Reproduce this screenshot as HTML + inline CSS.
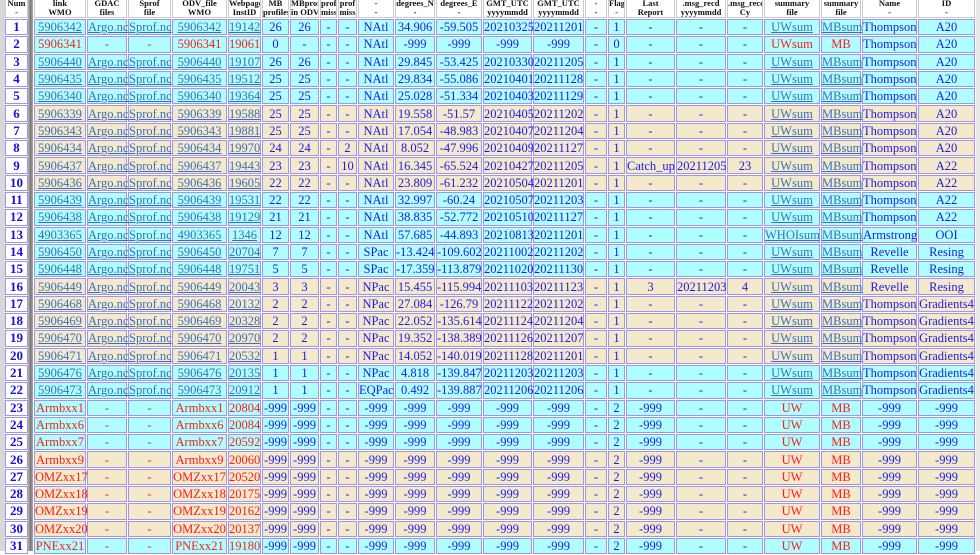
<!DOCTYPE html>
<html><head><meta charset="utf-8"><style>
html,body{margin:0;padding:0;width:980px;height:551px;overflow:hidden;background:#fff;font-family:"Liberation Serif",serif;}
#lb{position:absolute;left:0;top:0;width:5px;height:551px;background:#d8d8d8;}
#bar{position:absolute;left:28px;top:0;width:5px;height:551px;background:linear-gradient(90deg,#bbb,#777,#aaa);}
#rb{position:absolute;left:976px;top:0;width:4px;height:551px;background:#e8e8e8;}
table{position:absolute;top:-3px;border-collapse:separate;border-spacing:1px;table-layout:fixed;}
td,th{padding:0;box-sizing:border-box;border:1px solid #a094f0;height:16.3px;text-align:center;white-space:nowrap;overflow:visible;font-size:12.5px;line-height:14px;color:#1b1bee;font-weight:normal;}
th{height:19px;background:#fff;border-color:#ccc;color:#111;font-weight:bold;font-size:8.5px;line-height:9px;overflow:hidden;}
#num{left:4px;width:25px;}
#num td{background:#fff;font-weight:bold;font-size:13px;color:#1010e0;}
#main{left:33px;width:943px;}
tr.c td{background:#b0ffff;}
tr.b td{background:#f5e9cc;}
a{color:#3a6fc0;text-decoration:underline;}
.r{color:#ff1a1a;}
</style></head><body>
<div id="lb"></div><div id="bar"></div><div id="rb"></div>
<table id="num">
<tr><th>Num<br>-</th></tr>
<tr><td>1</td></tr><tr><td>2</td></tr><tr><td>3</td></tr><tr><td>4</td></tr><tr><td>5</td></tr><tr><td>6</td></tr><tr><td>7</td></tr><tr><td>8</td></tr><tr><td>9</td></tr><tr><td>10</td></tr><tr><td>11</td></tr><tr><td>12</td></tr><tr><td>13</td></tr><tr><td>14</td></tr><tr><td>15</td></tr><tr><td>16</td></tr><tr><td>17</td></tr><tr><td>18</td></tr><tr><td>19</td></tr><tr><td>20</td></tr><tr><td>21</td></tr><tr><td>22</td></tr><tr><td>23</td></tr><tr><td>24</td></tr><tr><td>25</td></tr><tr><td>26</td></tr><tr><td>27</td></tr><tr><td>28</td></tr><tr><td>29</td></tr><tr><td>30</td></tr><tr><td>31</td></tr>
</table>
<table id="main">
<colgroup><col style="width:52px"><col style="width:40px"><col style="width:43px"><col style="width:55px"><col style="width:33px"><col style="width:27px"><col style="width:29px"><col style="width:17px"><col style="width:19px"><col style="width:36px"><col style="width:40px"><col style="width:46px"><col style="width:49px"><col style="width:51px"><col style="width:22px"><col style="width:17px"><col style="width:49px"><col style="width:50px"><col style="width:36px"><col style="width:56px"><col style="width:40px"><col style="width:55px"><col style="width:57px"></colgroup>
<tr><th>link<br>WMO</th><th>GDAC<br>files</th><th>Sprof<br>file</th><th>ODV_file<br>WMO</th><th>Webpage<br>InstID</th><th>MB<br>profiles</th><th>MBprof<br>in ODV</th><th>prof<br>miss</th><th>prof<br>miss</th><th>-<br>-</th><th>degrees_N<br>-</th><th>degrees_E<br>-</th><th>GMT_UTC<br>yyyymmdd</th><th>GMT_UTC<br>yyyymmdd</th><th>-<br>-</th><th>Flag<br>-</th><th>Last<br>Report</th><th>.msg_recd<br>yyyymmdd</th><th>.msg_recd<br>Cy</th><th>summary<br>file</th><th>summary<br>file</th><th>Name<br>-</th><th>ID<br>-</th></tr>
<tr class="c"><td><a>5906342</a></td><td><a>Argo.nc</a></td><td><a>Sprof.nc</a></td><td><a>5906342</a></td><td><a>19142</a></td><td>26</td><td>26</td><td>-</td><td>-</td><td>NAtl</td><td>34.906</td><td>-59.505</td><td>20210325</td><td>20211201</td><td>-</td><td>1</td><td>-</td><td>-</td><td>-</td><td><a>UWsum</a></td><td><a>MBsum</a></td><td>Thompson</td><td>A20</td></tr>
<tr class="c"><td class="r">5906341</td><td class="r">-</td><td class="r">-</td><td class="r">5906341</td><td class="r">19061</td><td>0</td><td>-</td><td>-</td><td>-</td><td>NAtl</td><td>-999</td><td>-999</td><td>-999</td><td>-999</td><td>-</td><td>0</td><td>-</td><td>-</td><td>-</td><td class="r">UWsum</td><td class="r">MB</td><td>Thompson</td><td>A20</td></tr>
<tr class="c"><td><a>5906440</a></td><td><a>Argo.nc</a></td><td><a>Sprof.nc</a></td><td><a>5906440</a></td><td><a>19107</a></td><td>26</td><td>26</td><td>-</td><td>-</td><td>NAtl</td><td>29.845</td><td>-53.425</td><td>20210330</td><td>20211205</td><td>-</td><td>1</td><td>-</td><td>-</td><td>-</td><td><a>UWsum</a></td><td><a>MBsum</a></td><td>Thompson</td><td>A20</td></tr>
<tr class="c"><td><a>5906435</a></td><td><a>Argo.nc</a></td><td><a>Sprof.nc</a></td><td><a>5906435</a></td><td><a>19512</a></td><td>25</td><td>25</td><td>-</td><td>-</td><td>NAtl</td><td>29.834</td><td>-55.086</td><td>20210401</td><td>20211128</td><td>-</td><td>1</td><td>-</td><td>-</td><td>-</td><td><a>UWsum</a></td><td><a>MBsum</a></td><td>Thompson</td><td>A20</td></tr>
<tr class="c"><td><a>5906340</a></td><td><a>Argo.nc</a></td><td><a>Sprof.nc</a></td><td><a>5906340</a></td><td><a>19364</a></td><td>25</td><td>25</td><td>-</td><td>-</td><td>NAtl</td><td>25.028</td><td>-51.334</td><td>20210403</td><td>20211129</td><td>-</td><td>1</td><td>-</td><td>-</td><td>-</td><td><a>UWsum</a></td><td><a>MBsum</a></td><td>Thompson</td><td>A20</td></tr>
<tr class="b"><td><a>5906339</a></td><td><a>Argo.nc</a></td><td><a>Sprof.nc</a></td><td><a>5906339</a></td><td><a>19588</a></td><td>25</td><td>25</td><td>-</td><td>-</td><td>NAtl</td><td>19.558</td><td>-51.57</td><td>20210405</td><td>20211202</td><td>-</td><td>1</td><td>-</td><td>-</td><td>-</td><td><a>UWsum</a></td><td><a>MBsum</a></td><td>Thompson</td><td>A20</td></tr>
<tr class="b"><td><a>5906343</a></td><td><a>Argo.nc</a></td><td><a>Sprof.nc</a></td><td><a>5906343</a></td><td><a>19881</a></td><td>25</td><td>25</td><td>-</td><td>-</td><td>NAtl</td><td>17.054</td><td>-48.983</td><td>20210407</td><td>20211204</td><td>-</td><td>1</td><td>-</td><td>-</td><td>-</td><td><a>UWsum</a></td><td><a>MBsum</a></td><td>Thompson</td><td>A20</td></tr>
<tr class="b"><td><a>5906434</a></td><td><a>Argo.nc</a></td><td><a>Sprof.nc</a></td><td><a>5906434</a></td><td><a>19970</a></td><td>24</td><td>24</td><td>-</td><td>2</td><td>NAtl</td><td>8.052</td><td>-47.996</td><td>20210409</td><td>20211127</td><td>-</td><td>1</td><td>-</td><td>-</td><td>-</td><td><a>UWsum</a></td><td><a>MBsum</a></td><td>Thompson</td><td>A20</td></tr>
<tr class="b"><td><a>5906437</a></td><td><a>Argo.nc</a></td><td><a>Sprof.nc</a></td><td><a>5906437</a></td><td><a>19443</a></td><td>23</td><td>23</td><td>-</td><td>10</td><td>NAtl</td><td>16.345</td><td>-65.524</td><td>20210427</td><td>20211205</td><td>-</td><td>1</td><td>Catch_up</td><td>20211205</td><td>23</td><td><a>UWsum</a></td><td><a>MBsum</a></td><td>Thompson</td><td>A22</td></tr>
<tr class="b"><td><a>5906436</a></td><td><a>Argo.nc</a></td><td><a>Sprof.nc</a></td><td><a>5906436</a></td><td><a>19605</a></td><td>22</td><td>22</td><td>-</td><td>-</td><td>NAtl</td><td>23.809</td><td>-61.232</td><td>20210504</td><td>20211201</td><td>-</td><td>1</td><td>-</td><td>-</td><td>-</td><td><a>UWsum</a></td><td><a>MBsum</a></td><td>Thompson</td><td>A22</td></tr>
<tr class="c"><td><a>5906439</a></td><td><a>Argo.nc</a></td><td><a>Sprof.nc</a></td><td><a>5906439</a></td><td><a>19531</a></td><td>22</td><td>22</td><td>-</td><td>-</td><td>NAtl</td><td>32.997</td><td>-60.24</td><td>20210507</td><td>20211203</td><td>-</td><td>1</td><td>-</td><td>-</td><td>-</td><td><a>UWsum</a></td><td><a>MBsum</a></td><td>Thompson</td><td>A22</td></tr>
<tr class="c"><td><a>5906438</a></td><td><a>Argo.nc</a></td><td><a>Sprof.nc</a></td><td><a>5906438</a></td><td><a>19129</a></td><td>21</td><td>21</td><td>-</td><td>-</td><td>NAtl</td><td>38.835</td><td>-52.772</td><td>20210510</td><td>20211127</td><td>-</td><td>1</td><td>-</td><td>-</td><td>-</td><td><a>UWsum</a></td><td><a>MBsum</a></td><td>Thompson</td><td>A22</td></tr>
<tr class="c"><td><a>4903365</a></td><td><a>Argo.nc</a></td><td><a>Sprof.nc</a></td><td><a>4903365</a></td><td><a>1346</a></td><td>12</td><td>12</td><td>-</td><td>-</td><td>NAtl</td><td>57.685</td><td>-44.893</td><td>20210813</td><td>20211201</td><td>-</td><td>1</td><td>-</td><td>-</td><td>-</td><td><a>WHOIsum</a></td><td><a>MBsum</a></td><td>Armstrong</td><td>OOI</td></tr>
<tr class="c"><td><a>5906450</a></td><td><a>Argo.nc</a></td><td><a>Sprof.nc</a></td><td><a>5906450</a></td><td><a>20704</a></td><td>7</td><td>7</td><td>-</td><td>-</td><td>SPac</td><td>-13.424</td><td>-109.602</td><td>20211002</td><td>20211202</td><td>-</td><td>1</td><td>-</td><td>-</td><td>-</td><td><a>UWsum</a></td><td><a>MBsum</a></td><td>Revelle</td><td>Resing</td></tr>
<tr class="c"><td><a>5906448</a></td><td><a>Argo.nc</a></td><td><a>Sprof.nc</a></td><td><a>5906448</a></td><td><a>19751</a></td><td>5</td><td>5</td><td>-</td><td>-</td><td>SPac</td><td>-17.359</td><td>-113.879</td><td>20211020</td><td>20211130</td><td>-</td><td>1</td><td>-</td><td>-</td><td>-</td><td><a>UWsum</a></td><td><a>MBsum</a></td><td>Revelle</td><td>Resing</td></tr>
<tr class="b"><td><a>5906449</a></td><td><a>Argo.nc</a></td><td><a>Sprof.nc</a></td><td><a>5906449</a></td><td><a>20043</a></td><td>3</td><td>3</td><td>-</td><td>-</td><td>NPac</td><td>15.455</td><td>-115.994</td><td>20211103</td><td>20211123</td><td>-</td><td>1</td><td>3</td><td>20211203</td><td>4</td><td><a>UWsum</a></td><td><a>MBsum</a></td><td>Revelle</td><td>Resing</td></tr>
<tr class="b"><td><a>5906468</a></td><td><a>Argo.nc</a></td><td><a>Sprof.nc</a></td><td><a>5906468</a></td><td><a>20132</a></td><td>2</td><td>2</td><td>-</td><td>-</td><td>NPac</td><td>27.084</td><td>-126.79</td><td>20211122</td><td>20211202</td><td>-</td><td>1</td><td>-</td><td>-</td><td>-</td><td><a>UWsum</a></td><td><a>MBsum</a></td><td>Thompson</td><td>Gradients4</td></tr>
<tr class="b"><td><a>5906469</a></td><td><a>Argo.nc</a></td><td><a>Sprof.nc</a></td><td><a>5906469</a></td><td><a>20328</a></td><td>2</td><td>2</td><td>-</td><td>-</td><td>NPac</td><td>22.052</td><td>-135.614</td><td>20211124</td><td>20211204</td><td>-</td><td>1</td><td>-</td><td>-</td><td>-</td><td><a>UWsum</a></td><td><a>MBsum</a></td><td>Thompson</td><td>Gradients4</td></tr>
<tr class="b"><td><a>5906470</a></td><td><a>Argo.nc</a></td><td><a>Sprof.nc</a></td><td><a>5906470</a></td><td><a>20970</a></td><td>2</td><td>2</td><td>-</td><td>-</td><td>NPac</td><td>19.352</td><td>-138.389</td><td>20211126</td><td>20211207</td><td>-</td><td>1</td><td>-</td><td>-</td><td>-</td><td><a>UWsum</a></td><td><a>MBsum</a></td><td>Thompson</td><td>Gradients4</td></tr>
<tr class="b"><td><a>5906471</a></td><td><a>Argo.nc</a></td><td><a>Sprof.nc</a></td><td><a>5906471</a></td><td><a>20532</a></td><td>1</td><td>1</td><td>-</td><td>-</td><td>NPac</td><td>14.052</td><td>-140.019</td><td>20211128</td><td>20211201</td><td>-</td><td>1</td><td>-</td><td>-</td><td>-</td><td><a>UWsum</a></td><td><a>MBsum</a></td><td>Thompson</td><td>Gradients4</td></tr>
<tr class="c"><td><a>5906476</a></td><td><a>Argo.nc</a></td><td><a>Sprof.nc</a></td><td><a>5906476</a></td><td><a>20135</a></td><td>1</td><td>1</td><td>-</td><td>-</td><td>NPac</td><td>4.818</td><td>-139.847</td><td>20211203</td><td>20211203</td><td>-</td><td>1</td><td>-</td><td>-</td><td>-</td><td><a>UWsum</a></td><td><a>MBsum</a></td><td>Thompson</td><td>Gradients4</td></tr>
<tr class="c"><td><a>5906473</a></td><td><a>Argo.nc</a></td><td><a>Sprof.nc</a></td><td><a>5906473</a></td><td><a>20912</a></td><td>1</td><td>1</td><td>-</td><td>-</td><td>EQPac</td><td>0.492</td><td>-139.887</td><td>20211206</td><td>20211206</td><td>-</td><td>1</td><td>-</td><td>-</td><td>-</td><td><a>UWsum</a></td><td><a>MBsum</a></td><td>Thompson</td><td>Gradients4</td></tr>
<tr class="c"><td class="r">Armbxx1</td><td class="r">-</td><td class="r">-</td><td class="r">Armbxx1</td><td class="r">20804</td><td>-999</td><td>-999</td><td>-</td><td>-</td><td>-999</td><td>-999</td><td>-999</td><td>-999</td><td>-999</td><td>-</td><td>2</td><td>-999</td><td>-</td><td>-</td><td class="r">UW</td><td class="r">MB</td><td>-999</td><td>-999</td></tr>
<tr class="c"><td class="r">Armbxx6</td><td class="r">-</td><td class="r">-</td><td class="r">Armbxx6</td><td class="r">20084</td><td>-999</td><td>-999</td><td>-</td><td>-</td><td>-999</td><td>-999</td><td>-999</td><td>-999</td><td>-999</td><td>-</td><td>2</td><td>-999</td><td>-</td><td>-</td><td class="r">UW</td><td class="r">MB</td><td>-999</td><td>-999</td></tr>
<tr class="c"><td class="r">Armbxx7</td><td class="r">-</td><td class="r">-</td><td class="r">Armbxx7</td><td class="r">20592</td><td>-999</td><td>-999</td><td>-</td><td>-</td><td>-999</td><td>-999</td><td>-999</td><td>-999</td><td>-999</td><td>-</td><td>2</td><td>-999</td><td>-</td><td>-</td><td class="r">UW</td><td class="r">MB</td><td>-999</td><td>-999</td></tr>
<tr class="b"><td class="r">Armbxx9</td><td class="r">-</td><td class="r">-</td><td class="r">Armbxx9</td><td class="r">20060</td><td>-999</td><td>-999</td><td>-</td><td>-</td><td>-999</td><td>-999</td><td>-999</td><td>-999</td><td>-999</td><td>-</td><td>2</td><td>-999</td><td>-</td><td>-</td><td class="r">UW</td><td class="r">MB</td><td>-999</td><td>-999</td></tr>
<tr class="b"><td class="r">OMZxx17</td><td class="r">-</td><td class="r">-</td><td class="r">OMZxx17</td><td class="r">20520</td><td>-999</td><td>-999</td><td>-</td><td>-</td><td>-999</td><td>-999</td><td>-999</td><td>-999</td><td>-999</td><td>-</td><td>2</td><td>-999</td><td>-</td><td>-</td><td class="r">UW</td><td class="r">MB</td><td>-999</td><td>-999</td></tr>
<tr class="b"><td class="r">OMZxx18</td><td class="r">-</td><td class="r">-</td><td class="r">OMZxx18</td><td class="r">20175</td><td>-999</td><td>-999</td><td>-</td><td>-</td><td>-999</td><td>-999</td><td>-999</td><td>-999</td><td>-999</td><td>-</td><td>2</td><td>-999</td><td>-</td><td>-</td><td class="r">UW</td><td class="r">MB</td><td>-999</td><td>-999</td></tr>
<tr class="b"><td class="r">OMZxx19</td><td class="r">-</td><td class="r">-</td><td class="r">OMZxx19</td><td class="r">20162</td><td>-999</td><td>-999</td><td>-</td><td>-</td><td>-999</td><td>-999</td><td>-999</td><td>-999</td><td>-999</td><td>-</td><td>2</td><td>-999</td><td>-</td><td>-</td><td class="r">UW</td><td class="r">MB</td><td>-999</td><td>-999</td></tr>
<tr class="b"><td class="r">OMZxx20</td><td class="r">-</td><td class="r">-</td><td class="r">OMZxx20</td><td class="r">20137</td><td>-999</td><td>-999</td><td>-</td><td>-</td><td>-999</td><td>-999</td><td>-999</td><td>-999</td><td>-999</td><td>-</td><td>2</td><td>-999</td><td>-</td><td>-</td><td class="r">UW</td><td class="r">MB</td><td>-999</td><td>-999</td></tr>
<tr class="c"><td class="r">PNExx21</td><td class="r">-</td><td class="r">-</td><td class="r">PNExx21</td><td class="r">19180</td><td>-999</td><td>-999</td><td>-</td><td>-</td><td>-999</td><td>-999</td><td>-999</td><td>-999</td><td>-999</td><td>-</td><td>2</td><td>-999</td><td>-</td><td>-</td><td class="r">UW</td><td class="r">MB</td><td>-999</td><td>-999</td></tr>
</table>
</body></html>
